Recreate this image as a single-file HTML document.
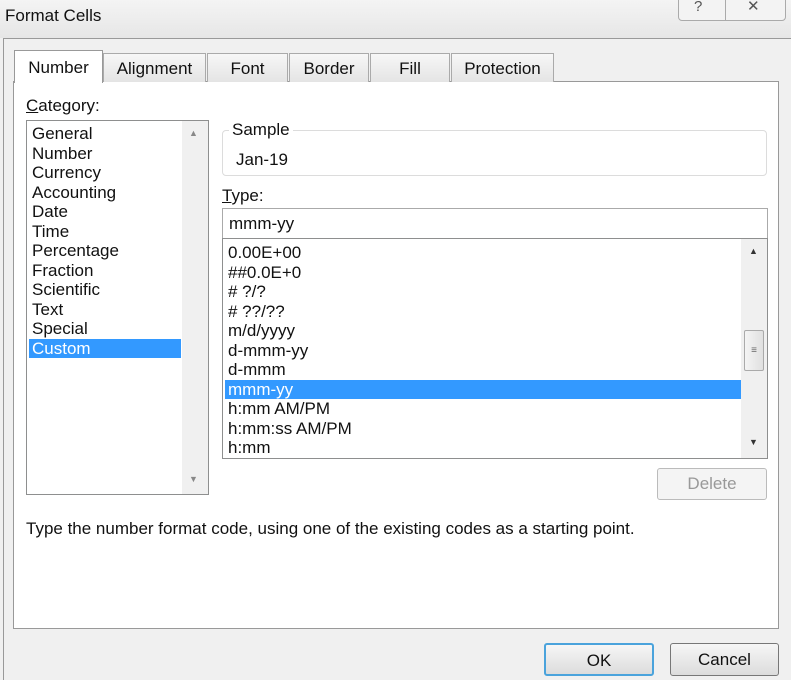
<!DOCTYPE html>
<html><head><style>
*{margin:0;padding:0;box-sizing:border-box}
body{width:791px;height:680px;position:relative;background:#f0f0f0;font-family:"Liberation Sans",sans-serif;font-size:17px;color:#111;overflow:hidden}
.a{position:absolute}
.titlebar{left:0;top:0;width:791px;height:38px;background:linear-gradient(#f4f4f4,#e6e6e6)}
.tab{position:absolute;top:53px;height:29px;border:1px solid #aaa;border-bottom:none;background:linear-gradient(#f7f7f7,#e4e4e4);text-align:center;line-height:29px;font-size:17px}
.list div{height:19.5px;line-height:19.5px;padding-left:5px;white-space:nowrap;font-size:17px}
.sel{background:#3399ff;color:#fff}
.btn{position:absolute;border:1px solid #999;border-radius:3px;background:linear-gradient(#f6f6f6,#dcdcdc);text-align:center;font-size:17px}
</style></head><body>
<div class="a titlebar"></div>
<div class="a" style="left:5px;top:6px;font-size:17px">Format Cells</div>
<div class="a" style="left:678px;top:-4px;width:108px;height:25px;border:1px solid #aaa;border-radius:4px;background:#f3f3f3"></div>
<div class="a" style="left:725px;top:-4px;width:1px;height:25px;background:#aaa"></div>
<div class="a" style="left:694px;top:-2px;font-size:15px;color:#555">?</div>
<div class="a" style="left:747px;top:-3px;font-size:15px;color:#555">✕</div>
<div class="a" style="left:3px;top:38px;width:788px;height:642px;border:1px solid #999;border-right:none;border-bottom:none;background:#f0f0f0"></div>
<div class="a" style="left:13px;top:81px;width:766px;height:548px;background:#fff;border:1px solid #999"></div>
<div class="tab" style="left:103px;width:103px">Alignment</div>
<div class="tab" style="left:207px;width:81px">Font</div>
<div class="tab" style="left:289px;width:80px">Border</div>
<div class="tab" style="left:370px;width:80px">Fill</div>
<div class="tab" style="left:451px;width:103px">Protection</div>
<div class="tab" style="left:14px;top:50px;width:89px;height:33px;background:#fff;line-height:33px;border-color:#999">Number</div>

<div class="a" style="left:26px;top:96px"><u>C</u>ategory:</div>
<div class="a list" style="left:26px;top:120px;width:183px;height:375px;border:1px solid #8e8f8f;background:#fff;padding-top:3px">
<div>General</div><div>Number</div><div>Currency</div><div>Accounting</div><div>Date</div><div>Time</div><div>Percentage</div><div>Fraction</div><div>Scientific</div><div>Text</div><div>Special</div><div class="sel" style="width:152px;margin-left:2px;padding-left:3px">Custom</div>
</div>
<div class="a" style="left:182px;top:121px;width:26px;height:373px;background:#f0f0f0"></div>
<div class="a" style="left:189px;top:128px;font-size:9px;color:#888">▲</div>
<div class="a" style="left:189px;top:474px;font-size:9px;color:#888">▼</div>

<div class="a" style="left:222px;top:130px;width:545px;height:46px;border:1px solid #dcdcdc;border-radius:4px"></div>
<div class="a" style="left:229px;top:120px;background:#fff;padding:0 3px">Sample</div>
<div class="a" style="left:236px;top:150px">Jan-19</div>
<div class="a" style="left:222px;top:186px"><u>T</u>ype:</div>
<div class="a" style="left:222px;top:208px;width:546px;height:31px;border:1px solid #aaa;padding:5px 6px">mmm-yy</div>
<div class="a list" style="left:222px;top:238px;width:546px;height:221px;border:1px solid #8e8f8f;background:#fff;padding-top:4px">
<div>0.00E+00</div><div>##0.0E+0</div><div># ?/?</div><div># ??/??</div><div>m/d/yyyy</div><div>d-mmm-yy</div><div>d-mmm</div><div class="sel" style="width:516px;margin-left:2px;padding-left:3px">mmm-yy</div><div>h:mm AM/PM</div><div>h:mm:ss AM/PM</div><div>h:mm</div>
</div>
<div class="a" style="left:741px;top:239px;width:26px;height:219px;background:#f0f0f0"></div>
<div class="a" style="left:744px;top:330px;width:20px;height:41px;border:1px solid #aaa;border-radius:2px;background:linear-gradient(90deg,#f4f4f4,#e0e0e0);text-align:center;font-size:10px;line-height:39px;color:#666">≡</div>
<div class="a" style="left:749px;top:246px;font-size:9px;color:#333">▲</div>
<div class="a" style="left:749px;top:437px;font-size:9px;color:#333">▼</div>

<div class="btn" style="left:657px;top:468px;width:110px;height:32px;line-height:30px;color:#999;border-color:#bbb;background:#f4f4f4">Delete</div>
<div class="a" style="left:26px;top:519px">Type the number format code, using one of the existing codes as a starting point.</div>

<div class="btn" style="left:544px;top:643px;width:110px;height:33px;line-height:31px;border:2px solid #4aa3dc">OK</div>
<div class="btn" style="left:670px;top:643px;width:109px;height:33px;line-height:31px;border-color:#777">Cancel</div>
</body></html>
